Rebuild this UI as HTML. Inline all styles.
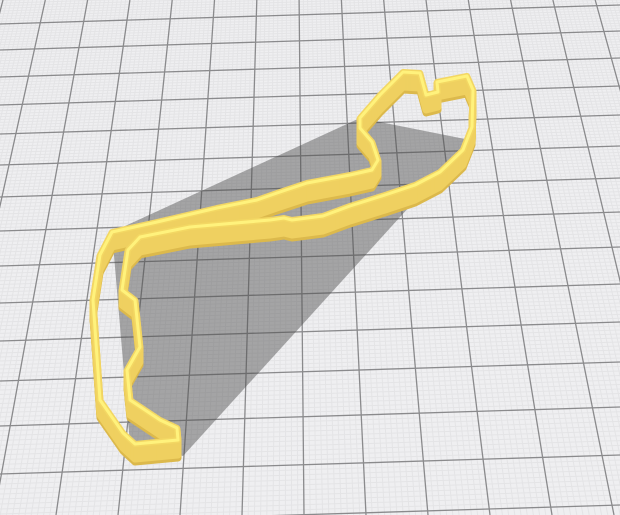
<!DOCTYPE html>
<html><head><meta charset="utf-8">
<style>html,body{margin:0;padding:0;background:#efeff1;overflow:hidden}svg{display:block}</style>
</head><body>
<svg id="s" width="620" height="515" viewBox="0 0 620 515" xmlns="http://www.w3.org/2000/svg">
<rect width="620" height="515" fill="#efeff1"/>
<g id="minor" stroke="#e4e4e6" stroke-width="1"></g>
<g id="grid" stroke="#8a8a8c" stroke-width="1.3"></g>
<polygon points="112,232 360,118 470,140 183,456 130,444" fill="#4a4a4a" opacity="0.45"/>
<defs>
<path id="t" d="M112,232 L157,222 L217,208 L257,200 L277,193 L307,183 L350,175 L372,170 L378,160 L372,142 L360,128 L360,118 L380,95 L403,72 L420,73 L426,95 L438,92 L437,82 L467,76 L473,90 L472,127 L463,150 L440,172 L415,185 L385,195 L350,206 L323,216 L292,220 L284,218 L270,220 L190,227 L140,237 L128,250 L122,290 L135,300 L140,347 L127,370 L130,400 L160,420 L177,428 L178,440 L135,444 L123,433 L100,400 L93,300 L100,255 Z" fill="none" stroke-linejoin="round"/>
</defs>
<g id="walls"></g>
<use href="#t" stroke="#f3d763" stroke-width="6"/>
<use href="#t" stroke="#fff27c" stroke-width="3"/>
</svg>
<script>
var NS="http://www.w3.org/2000/svg";
function ln(g,x1,y1,x2,y2){var l=document.createElementNS(NS,"line");l.setAttribute("x1",x1);l.setAttribute("y1",y1);l.setAttribute("x2",x2);l.setAttribute("y2",y2);document.getElementById(g).appendChild(l);}
var ys=[-2,24,50,77,105,134,165,197,231,266,303,341,381,426,474,524];
for(var i=0;i<ys.length;i++){ln("grid",0,ys[i],620,ys[i]-19);}
for(var i=0;i<ys.length-1;i++){for(var j=1;j<10;j++){var y=ys[i]+(ys[i+1]-ys[i])*j/10;ln("minor",0,y,620,y-19);}}
for(var k=-3;k<17;k++){var xt=3+42.3*k,xb=428+62*(k-9);ln("grid",xt,0,xb,515);
 for(var j=1;j<10;j++){var a=xt+42.3*j/10,b=xb+62*j/10;ln("minor",a,0,b,515);}}
var w=document.getElementById("walls");
for(var i=18;i>=1;i--){var u=document.createElementNS(NS,"use");u.setAttribute("href","#t");u.setAttribute("transform","translate(0,"+i+")");
 var c=i>15?"#dcb94c":"#efd060";u.setAttribute("stroke",c);u.setAttribute("stroke-width","7");w.appendChild(u);}
</script>
</body></html>
